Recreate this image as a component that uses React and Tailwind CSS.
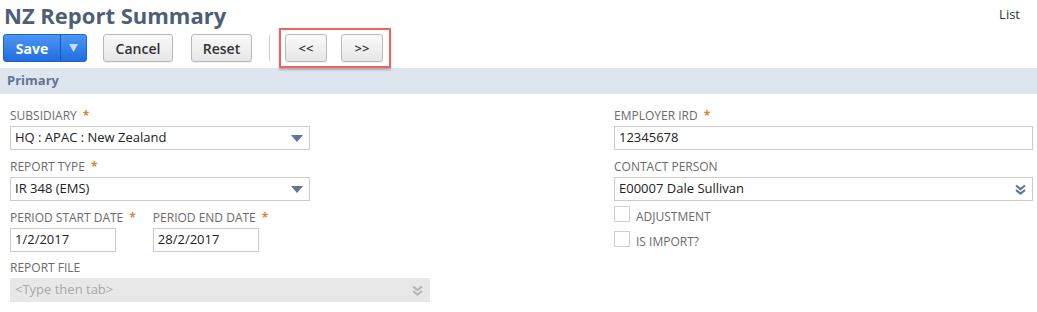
import React from 'react';

const Star = () => <span className="ml-1.5 text-[#d5873a] font-bold">*</span>;

const Label = ({ children, req }) => (
  <div className="h-[17px] leading-[17px] text-[12px] text-[#6b6b6b] uppercase mb-[2px] whitespace-nowrap">
    {children}
    {req && <Star />}
  </div>
);

const Caret = () => (
  <svg width="12" height="7" viewBox="0 0 12 7"><path d="M0 0h12L6 7z" fill="#5d7699" /></svg>
);

const DoubleChevron = ({ color = '#5d7699' }) => (
  <svg width="11" height="11" viewBox="0 0 11 11" fill="none" stroke={color} strokeWidth="2.2">
    <path d="M1 1.5l4.5 3.5 4.5-3.5" />
    <path d="M1 6l4.5 3.5L10 6" />
  </svg>
);

const Field = ({ value, w, icon, disabled, placeholder }) => (
  <div
    className={`h-[24px] border flex items-center justify-between px-[4px] text-[13px] ${
      disabled ? 'bg-[#e8e8e8] border-[#e8e8e8] text-[#a8a8a8]' : 'bg-white border-[#cccccc] text-[#222]'
    } ${w}`}
  >
    <span>{value || placeholder}</span>
    {icon && <span className="pr-[2px] flex items-center">{icon}</span>}
  </div>
);

const Btn = ({ children, w }) => (
  <button className={`h-[28px] ${w} rounded-[3px] border border-[#b9b9b9] bg-gradient-to-b from-[#fafafa] to-[#e6e6e6] text-[14px] font-semibold text-[#333] shadow-[0_1px_0_rgba(0,0,0,0.05)]`}>
    {children}
  </button>
);

const Check = ({ label }) => (
  <div className="flex items-center h-[16px] mb-[9px]">
    <div className="w-[16px] h-[16px] border border-[#d0d0d0] bg-white" />
    <span className="ml-[6px] mt-[6px] text-[12px] text-[#6b6b6b] uppercase">{label}</span>
  </div>
);

export default function App() {
  return (
    <div className="w-[1037px] h-[312px] bg-white font-['Open_Sans',sans-serif] overflow-hidden">
      <div className="flex justify-between items-start h-[28px]">
        <h1 className="pl-[4px] text-[22px] leading-[30px] h-[28px] font-bold text-[#4d5e79]">NZ Report Summary</h1>
        <div className="pr-[17px] pt-[5px] text-[13px] text-[#333]">List</div>
      </div>

      <div className="flex items-center h-[40px] pl-[3px]">
        <div className="flex h-[28px] rounded-[3px] overflow-hidden border border-[#1f63c5] bg-gradient-to-b from-[#4d95f4] to-[#1e6de0]">
          <div className="w-[56px] flex items-center justify-center text-white font-bold text-[14px]">Save</div>
          <div className="w-[26px] border-l border-[#1c58ad] flex items-center justify-center">
            <svg width="9" height="8" viewBox="0 0 9 8"><path d="M0 0h9L4.5 8z" fill="#c7dbf6" /></svg>
          </div>
        </div>
        <div className="ml-[16px]"><Btn w="w-[70px]">Cancel</Btn></div>
        <div className="ml-[18px]"><Btn w="w-[61px]">Reset</Btn></div>
        <div className="ml-[17px] w-px h-[26px] bg-[#cfcfcf]" />
        <div className="ml-[9px] h-[40px] w-[112px] border-2 border-[#f0655b] shadow-[0_2px_2px_rgba(0,0,0,0.25)] flex items-center pl-[4px] gap-[14px]">
          <Btn w="w-[42px]"><span className="text-[13px]">&lt;&lt;</span></Btn>
          <Btn w="w-[42px]"><span className="text-[13px]">&gt;&gt;</span></Btn>
        </div>
      </div>

      <div className="h-[26px] bg-[#dfe5ee] flex items-center pl-[7px] text-[13px] font-bold text-[#5f7393]">Primary</div>

      <div className="flex pt-[13px]">
        <div className="pl-[10px] w-[614px]">
          <Label req>Subsidiary</Label>
          <Field w="w-[300px]" value="HQ : APAC : New Zealand" icon={<Caret />} />
          <div className="h-[8px]" />
          <Label req>Report Type</Label>
          <Field w="w-[300px]" value="IR 348 (EMS)" icon={<Caret />} />
          <div className="h-[8px]" />
          <div className="flex gap-[17px]">
            <div>
              <Label req>Period Start Date</Label>
              <Field w="w-[106px]" value="1/2/2017" />
            </div>
            <div>
              <Label req>Period End Date</Label>
              <Field w="w-[106px]" value="28/2/2017" />
            </div>
          </div>
          <div className="h-[7px]" />
          <Label>Report File</Label>
          <Field w="w-[420px]" disabled placeholder="<Type then tab>" icon={<DoubleChevron color="#b5b5b5" />} />
        </div>
        <div className="w-[419px]">
          <Label req>Employer IRD</Label>
          <Field w="w-[419px]" value="12345678" />
          <div className="h-[8px]" />
          <Label>Contact Person</Label>
          <Field w="w-[419px]" value="E00007 Dale Sullivan" icon={<DoubleChevron />} />
          <div className="h-[5px]" />
          <Check label="Adjustment" />
          <Check label="Is Import?" />
        </div>
      </div>
    </div>
  );
}
